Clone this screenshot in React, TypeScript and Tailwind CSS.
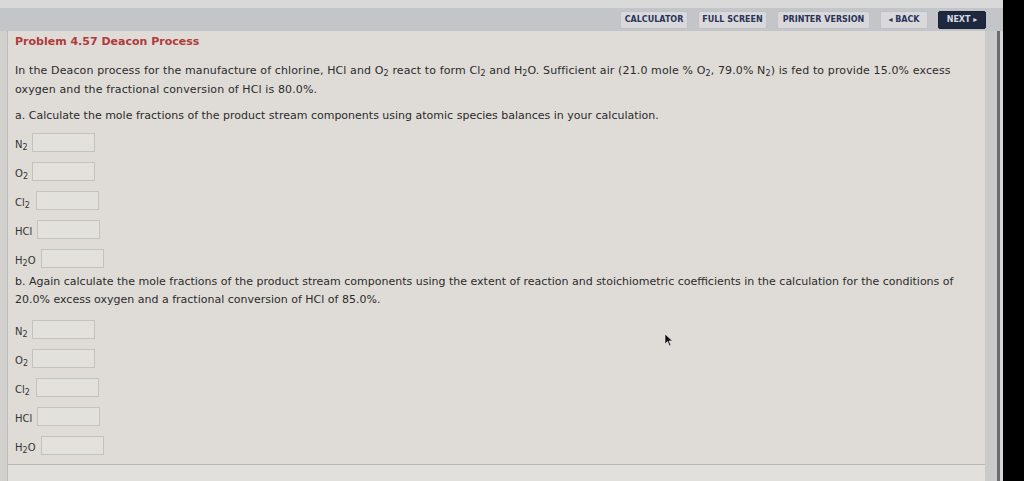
import React from 'react';

const font = { fontFamily: '"DejaVu Sans", Verdana, sans-serif' };

function Sub({ children }: { children: React.ReactNode }) {
  return <span className="inline-block text-[8px] leading-[8px] translate-y-[2px]">{children}</span>;
}

function Field({ label, pad }: { label: React.ReactNode; pad: number }) {
  return (
    <div className="flex items-center h-[29px]">
      <span className="text-[10px] text-[#333] leading-none mt-[5px]">{label}</span>
      <span
        className="h-[19px] border border-[#c4c2bd] bg-[#e3e1dc] w-[63px]"
        style={{ marginLeft: pad }}
      />
    </div>
  );
}

function Fields() {
  return (
    <div className="flex flex-col">
      <Field label={<>N<Sub>2</Sub></>} pad={4} />
      <Field label={<>O<Sub>2</Sub></>} pad={4} />
      <Field label={<>Cl<Sub>2</Sub></>} pad={6} />
      <Field label={<>HCl</>} pad={5} />
      <Field label={<>H<Sub>2</Sub>O</>} pad={5} />
    </div>
  );
}

function ToolButton({ children, dark, w }: { children: React.ReactNode; dark?: boolean; w: string }) {
  return (
    <div
      className={`${w} h-[18px] flex items-center justify-center text-[8px] font-bold rounded-[2px] border ${
        dark ? 'bg-[#1e2940] text-[#d7dbe4] border-[#1a2236]' : 'bg-[#d9d9dc] text-[#2a3358] border-[#c2c2c6]'
      }`}
    >
      {children}
    </div>
  );
}

export default function App() {
  return (
    <div className="w-[1024px] h-[481px] flex bg-black overflow-hidden" style={font}>
      <div className="w-[1003px] h-[481px] flex flex-col bg-[#d6d6d6]">
        <div className="h-[8px] shrink-0 bg-[#d9d9d9]" />
        <div className="h-[23px] shrink-0 bg-[#c3c5c9] flex items-center justify-end gap-[10px] pr-[17px]">
          <ToolButton w="w-[68px]">CALCULATOR</ToolButton>
          <ToolButton w="w-[69px]">FULL SCREEN</ToolButton>
          <ToolButton w="w-[93px]">PRINTER VERSION</ToolButton>
          <ToolButton w="w-[48px]">◂ BACK</ToolButton>
          <ToolButton w="w-[48px]" dark>NEXT ▸</ToolButton>
        </div>
        <div className="flex flex-1 min-h-0">
          <div className="w-[8px] shrink-0 bg-[#d2d1ce] border-r border-[#bdbcb8]" />
          <div className="w-[977px] shrink-0 flex flex-col">
            <div className="relative flex-1 min-h-0 overflow-hidden bg-[#dfdcd7] border-b border-[#b9b7b2] pl-[7px] pr-[10px] pt-[4px] text-[#2b2b2b]">
              <div className="text-[11px] font-bold text-[#b03a3a] leading-[14px]">Problem 4.57 Deacon Process</div>
              <p className="mt-[12px] text-[11px] leading-[19px] tracking-[0.12px] max-w-[955px]">
                In the Deacon process for the manufacture of chlorine, HCl and O<Sub>2</Sub> react to form Cl<Sub>2</Sub> and H<Sub>2</Sub>O. Sufficient air (21.0 mole % O<Sub>2</Sub>, 79.0% N<Sub>2</Sub>) is fed to provide 15.0% excess oxygen and the fractional conversion of HCl is 80.0%.
              </p>
              <p className="mt-[10px] text-[11px] leading-[14px]">
                a. Calculate the mole fractions of the product stream components using atomic species balances in your calculation.
              </p>
              <div className="mt-[5px]">
                <Fields />
              </div>
              <p className="text-[11px] leading-[18px]">
                b. Again calculate the mole fractions of the product stream components using the extent of reaction and stoichiometric coefficients in the calculation for the conditions of 20.0% excess oxygen and a fractional conversion of HCl of 85.0%.
              </p>
              <div className="mt-[6px]">
                <Fields />
              </div>
              <svg className="absolute left-[656px] top-[302px]" width="10" height="14" viewBox="0 0 10 14">
                <path d="M1 1 L1 11 L3.5 8.5 L5.5 13 L7 12.3 L5 8 L8.5 8 Z" fill="#111" stroke="#eee" strokeWidth="0.6" />
              </svg>
            </div>
            <div className="h-[16px] shrink-0 bg-[#e2e0dc]" />
          </div>
          <div className="w-[15px] shrink-0 bg-[#cacaca] border-r-[3px] border-[#6b6b70]" />
        </div>
      </div>
      <div className="flex-1 bg-black" />
    </div>
  );
}
